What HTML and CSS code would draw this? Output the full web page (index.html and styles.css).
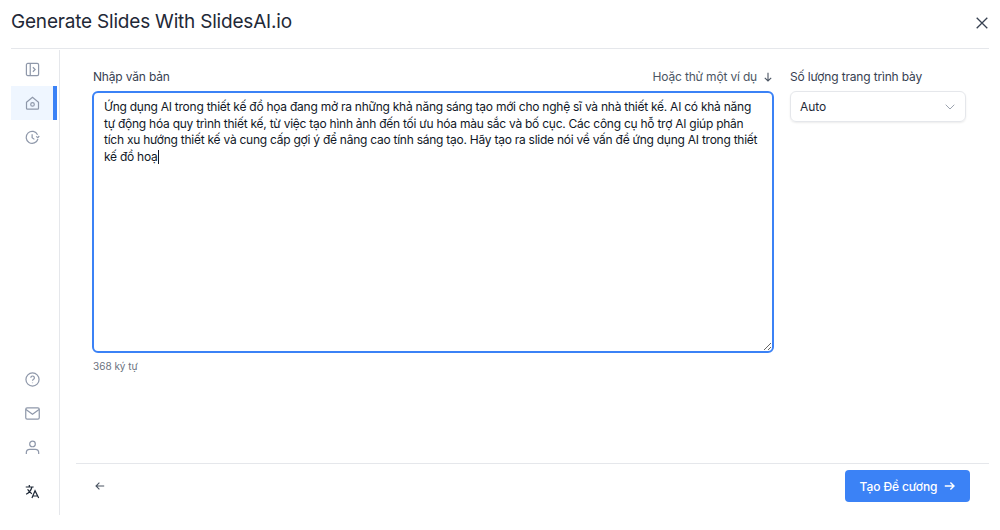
FILE: index.html
```html
<!DOCTYPE html>
<html lang="en">
<head>
    <meta charset="UTF-8">
    <meta name="viewport" content="width=device-width, initial-scale=1.0">
    <title>Generate Slides With SlidesAI.io</title>
    <link rel="stylesheet" href="styles.css">
</head>
<body>
    <div class="dialog">
        <header class="header">
            <h1>Generate Slides With SlidesAI.io</h1>
            <button class="close" aria-label="Close">
                <svg width="12" height="12" viewBox="0 0 12 12"><path d="M.7.7l10.6 10.6M11.3.7L.7 11.3" stroke="#374151" stroke-width="1.3" fill="none"/></svg>
            </button>
        </header>
        <div class="body">
            <nav class="sidebar">
                <div class="nav-top">
                    <a class="nav-item">
                        <svg class="icon" viewBox="0 0 16 16"><rect x="1.5" y="1.5" width="13" height="13" rx="1.5"/><path d="M5.6 1.5v13M8.4 5.6L10.8 8l-2.4 2.4"/></svg>
                    </a>
                    <a class="nav-item active">
                        <svg class="icon" viewBox="0 0 16 16"><path d="M1.6 6.7L8 1.4l6.4 5.3v6.4a1 1 0 0 1-1 1H2.6a1 1 0 0 1-1-1z"/><circle cx="8" cy="9" r="1.9"/></svg>
                    </a>
                    <a class="nav-item">
                        <svg class="icon" viewBox="0 0 16 16"><path d="M13.8 9.6A6.4 6.4 0 1 1 13.4 5"/><path d="M7.6 4.4v3.9l2.4 1.7"/><path d="M15.2 6.4l-1.5 1.8-1.8-1.4"/></svg>
                    </a>
                </div>
                <div class="nav-bottom">
                    <a class="nav-item">
                        <svg class="icon" viewBox="0 0 16 16"><circle cx="8" cy="8" r="7"/><path d="M6.2 6.2a1.9 1.9 0 1 1 2.9 1.6c-.7.4-1.1.8-1.1 1.6"/><path d="M8 11.3v.6"/></svg>
                    </a>
                    <a class="nav-item">
                        <svg class="icon" viewBox="0 0 16 16"><rect x=".8" y="2" width="14.4" height="12" rx="1.5"/><path d="M1 3.8l7 5 7-5"/></svg>
                    </a>
                    <a class="nav-item">
                        <svg class="icon" viewBox="0 0 16 16"><circle cx="8" cy="4.2" r="3"/><path d="M1.4 15v-1.4a3.6 3.6 0 0 1 3.6-3.6h6a3.6 3.6 0 0 1 3.6 3.6V15"/></svg>
                    </a>
                    <a class="nav-item lang">
                        <svg class="icon dark" viewBox="0 0 16 16"><path d="M.8 3.2h8.4M4.6 1v2.2M7.4 3.2C6.6 6.4 4 9.6 1.2 11M2.8 5.6c1 2.2 2.6 3.8 4.6 4.8M7.4 15l3.3-7.8L14.6 15M8.4 12.8h5.2"/></svg>
                    </a>
                </div>
            </nav>
            <main class="main">
                <div class="form">
                    <div class="text-col">
                        <div class="label-row">
                            <label class="label">Nhập văn bản</label>
                            <a class="example">Hoặc thử một ví dụ
                                <svg width="10" height="10" viewBox="0 0 10 10"><path d="M5 .8v8M1.8 5.8L5 9l3.2-3.2" stroke="#4b5563" stroke-width="1.1" fill="none"/></svg>
                            </a>
                        </div>
                        <div class="textarea">Ứng dụng AI trong thiết kế đồ họa đang mở ra những khả năng sáng tạo mới cho nghệ sĩ và nhà thiết kế. AI có khả năng tự động hóa quy trình thiết kế, từ việc tạo hình ảnh đến tối ưu hóa màu sắc và bố cục. Các công cụ hỗ trợ AI giúp phân tích xu hướng thiết kế và cung cấp gợi ý để nâng cao tính sáng tạo. Hãy tạo ra slide nói về vấn đề ứng dụng AI trong thiết kế đồ hoạ<span class="caret"></span></div>
                        <div class="count">368 ký tự</div>
                    </div>
                    <div class="pages-col">
                        <label class="label">Số lượng trang trình bày</label>
                        <div class="select">
                            <span>Auto</span>
                            <svg width="10" height="6" viewBox="0 0 10 6"><path d="M.7.7L5 5l4.3-4.3" stroke="#9ca3af" stroke-width="1" fill="none"/></svg>
                        </div>
                    </div>
                </div>
                <footer class="footer">
                    <a class="back">
                        <svg width="10" height="10" viewBox="0 0 10 10"><path d="M9.2 5H1M4.4 1.6L1 5l3.4 3.4" stroke="#4b5563" stroke-width="1.1" fill="none"/></svg>
                    </a>
                    <button class="primary">Tạo Đề cương
                        <svg width="11" height="10" viewBox="0 0 11 10"><path d="M.8 5H10M6.4 1.4L10 5 6.4 8.6" stroke="#fff" stroke-width="1.4" fill="none"/></svg>
                    </button>
                </footer>
            </main>
        </div>
    </div>
</body>
</html>
```

FILE: styles.css
```css
* {
    box-sizing: border-box;
}
body {
    margin: 0;
    font-family: Inter, "Noto Sans", sans-serif;
    background-color: #fff;
    color: #111827;
}
.dialog {
    width: 1000px;
    height: 530px;
    padding: 0 11px 15px;
    display: flex;
    flex-direction: column;
}
.header {
    height: 49px;
    flex: none;
    display: flex;
    align-items: center;
    justify-content: space-between;
    border-bottom: 1px solid #e5e7eb;
    padding-bottom: 5px;
}
.header h1 {
    margin: 0;
    font-size: 19px;
    font-weight: 400;
    letter-spacing: -0.2px;
    color: #1f2937;
}
.close {
    background: none;
    border: none;
    padding: 0;
    margin: 2px 1px 0 0;
    display: flex;
}
.body {
    flex: 1;
    display: flex;
    padding-top: 1px;
    min-height: 0;
}
.sidebar {
    width: 49px;
    flex: none;
    border-right: 1px solid #e5e7eb;
    display: flex;
    flex-direction: column;
    justify-content: space-between;
}
.nav-top {
    padding-top: 2px;
}
.nav-item {
    display: flex;
    align-items: center;
    justify-content: center;
    width: 46px;
    height: 34px;
    padding-right: 4px;
}
.nav-item.active {
    background-color: #eff6ff;
    border-right: 4px solid #3b82f6;
    padding-right: 0;
}
.nav-bottom .lang {
    margin: 9px 0 6px;
    height: 36px;
}
.icon {
    width: 15px;
    height: 15px;
    fill: none;
    stroke: #8f98aa;
    stroke-width: 1.3;
}
.icon.dark {
    stroke: #1f2937;
}
.main {
    flex: 1;
    display: flex;
    flex-direction: column;
    padding-left: 16px;
    min-width: 0;
}
.form {
    flex: 1;
    display: flex;
    gap: 16px;
    padding: 19px 0 0 16px;
}
.text-col {
    width: 682px;
}
.label-row {
    display: flex;
    justify-content: space-between;
    padding-right: 1px;
}
.label {
    display: block;
    font-size: 12px;
    line-height: 16px;
    letter-spacing: -0.17px;
    color: #374151;
    margin-bottom: 6px;
}
.text-col .label {
    padding-left: 1px;
}
.example {
    display: flex;
    align-items: flex-start;
    gap: 6px;
    font-size: 12px;
    line-height: 16px;
    letter-spacing: -0.17px;
    color: #4b5563;
}
.example svg {
    margin-top: 3px;
}
.textarea {
    width: 682px;
    height: 262px;
    border: 2px solid #3b82f6;
    border-radius: 6px;
    padding: 6px 12px 5px 10px;
    font-size: 12px;
    line-height: 16.7px;
    letter-spacing: -0.25px;
    color: #111827;
    resize: both;
    overflow: auto;
}
.caret {
    display: inline-block;
    width: 1.5px;
    height: 14px;
    margin-right: -2px;
    vertical-align: -3px;
    background-color: #111827;
}
.count {
    margin-top: 6px;
    padding-left: 1px;
    font-size: 10px;
    line-height: 14px;
    color: #6b7280;
}
.pages-col {
    width: 176px;
}
.select {
    height: 31px;
    margin-top: 1px;
    border: 1px solid #e5e7eb;
    border-radius: 6px;
    box-shadow: 0 1px 2px rgba(0, 0, 0, 0.08);
    display: flex;
    align-items: center;
    justify-content: space-between;
    padding: 0 10px 0 9px;
    font-size: 12px;
    letter-spacing: -0.1px;
    color: #1f2937;
}
.footer {
    height: 52px;
    flex: none;
    border-top: 1px solid #e5e7eb;
    display: flex;
    align-items: flex-start;
    justify-content: space-between;
    padding: 6px 19px 0 19px;
}
.back {
    display: flex;
    margin-top: 11px;
}
.primary {
    width: 125px;
    height: 32px;
    background-color: #3b82f6;
    color: #fff;
    border: none;
    border-radius: 4px;
    font-family: inherit;
    font-size: 12px;
    font-weight: 500;
    letter-spacing: -0.1px;
    display: flex;
    align-items: center;
    justify-content: center;
    gap: 7px;
}
```
